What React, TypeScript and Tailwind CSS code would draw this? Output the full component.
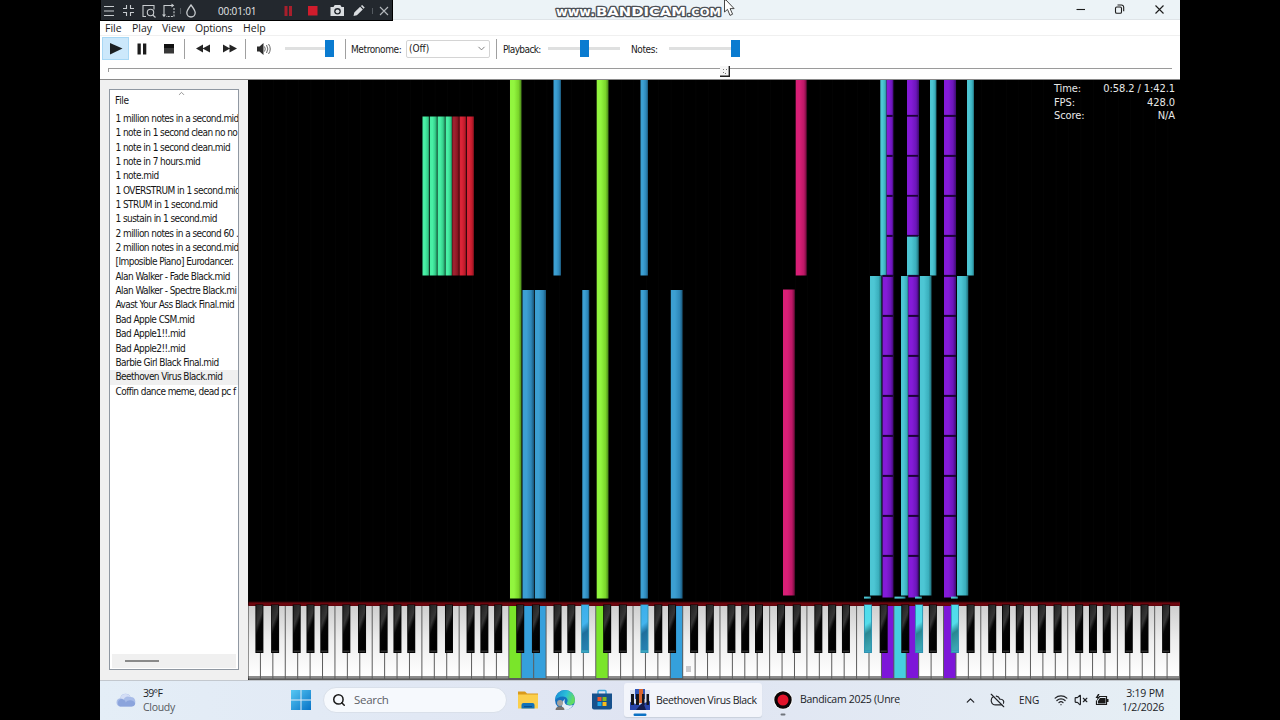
import type { ReactNode } from 'react';
import { Search, ChevronDown, ChevronUp, Wifi, VolumeX, CloudOff } from 'lucide-react';

const FILES = [
    '1 million notes in a second.mid',
    '1 note in 1 second clean no no',
    '1 note in 1 second clean.mid',
    '1 note in 7 hours.mid',
    '1 note.mid',
    '1 OVERSTRUM in 1 second.mid',
    '1 STRUM in 1 second.mid',
    '1 sustain in 1 second.mid',
    '2 million notes in a second 60 .',
    '2 million notes in a second.mid',
    '[Imposible Piano] Eurodancer.',
    'Alan Walker - Fade Black.mid',
    'Alan Walker - Spectre Black.mi',
    'Avast Your Ass Black Final.mid',
    'Bad Apple CSM.mid',
    'Bad Apple1!!.mid',
    'Bad Apple2!!.mid',
    'Barbie Girl Black Final.mid',
    'Beethoven Virus Black.mid',
    'Coffin dance meme, dead pc f',
];

const COLORS: Record<string, string[]> = {
    mint: ['#48f0a5', '#35cf8b', '#1b7a50'],
    dark: ['#9c2230', '#8c1622', '#560a12'],
    red: ['#da2437', '#bd1a2a', '#6b0e18'],
    lime: ['#92f53f', '#7ad52a', '#49851a'],
    blue: ['#3c9fd2', '#2d86b8', '#1a5576'],
    pink: ['#d81f76', '#bd1766', '#6b0c3a'],
    cyan: ['#4dc6d4', '#3aafbd', '#1f6c77'],
    violet: ['#841bd8', '#6c16bb', '#3d0b70'],
};

// x, y, width, height, color
const NOTES: [number, number, number, number, string][] = [
    [174.5, 36.5, 7, 159, 'mint'], [182, 36.5, 7, 159, 'mint'], [189.5, 36.5, 7.5, 159, 'mint'], [197.5, 36.5, 6.5, 159, 'mint'],
    [204.3, 36.5, 6.7, 159, 'dark'], [211.5, 36.5, 7, 159, 'red'], [219, 36.5, 7, 159, 'red'],
    [262, 0, 11.5, 518.5, 'lime'], [348.7, 0, 11.8, 518.5, 'lime'],
    [305.5, 0, 7.5, 195.5, 'blue'], [392.5, 0, 7.5, 195.5, 'blue'],
    [274.5, 210, 11.5, 308.5, 'blue'], [286.8, 210, 11.2, 308.5, 'blue'],
    [334.3, 210, 7, 308.5, 'blue'], [392.5, 210, 7.5, 308.5, 'blue'], [422.8, 210, 11.8, 308.5, 'blue'],
    [547.7, 0, 11, 195.5, 'pink'], [535, 209.5, 11.8, 306, 'pink'],
    [632.3, 0, 6.4, 195.5, 'cyan'], [638.7, 0, 6.8, 195.5, 'violet'],
    [659, 0, 12, 155.5, 'violet'], [659, 156, 11.8, 39.5, 'cyan'],
    [682, 0, 6.5, 195.5, 'cyan'], [719, 0, 7, 195.5, 'cyan'],
    [696, 0, 12, 517.5, 'violet'],
    [622, 196, 11.5, 319.5, 'cyan'], [634.5, 196, 11, 321.5, 'violet'],
    [653, 196, 7.5, 319.5, 'cyan'], [660.3, 196, 10.5, 321.5, 'violet'],
    [671.8, 196, 11.7, 319.5, 'cyan'], [709, 196, 11.3, 319.5, 'cyan'],
    [616, 516.6, 7, 2, 'cyan'], [646.5, 516.6, 11, 2, 'cyan'], [667, 516.6, 7, 2, 'cyan'], [703, 516.6, 7, 2, 'cyan'],
];

const WHITE_W = 931.5 / 75;
const BLACK_OFFSETS = [6.9, 22.6, 44.2, 58, 71.8];

const PRESSED_WHITE: Record<number, string> = {
    21: '#7ae52a', 22: '#35a0dc', 23: '#35a0dc', 28: '#7ae52a', 34: '#35a0dc',
    51: '#7d16d8', 52: '#46cfdf', 53: '#7d16d8', 56: '#7d16d8',
};

// octave * 5 + index of the black key in it
const PRESSED_BLACK: Record<number, string> = {
    19: 'url(#keyblue)', 22: 'url(#keyblue)', 35: 'url(#keycyan)', 38: 'url(#keycyan)', 40: 'url(#keycyan)',
};

function PianoRoll() {
    const whites = Array.from({ length: 75 }, (_, i) => i);
    const blacks: { id: number; x: number }[] = [];
    for (let oct = 0; oct < 11; oct++) {
        BLACK_OFFSETS.forEach((off, i) => {
            const x = 0.5 + oct * 7 * WHITE_W + off;
            if (x < 925) blacks.push({ id: oct * 5 + i, x });
        });
    }
    const lines = Array.from({ length: 12 }, (_, i) => 34.9 + i * 40);

    return (
        <svg width="932" height="600" viewBox="0 0 932 600" className="block">
            <defs>
                {Object.entries(COLORS).map(([name, c]) => (
                    <linearGradient key={name} id={name}>
                        <stop offset="0" stopColor={c[0]} />
                        <stop offset="0.35" stopColor={c[0]} />
                        <stop offset="0.75" stopColor={c[1]} />
                        <stop offset="1" stopColor={c[2]} />
                    </linearGradient>
                ))}
                <linearGradient id="ivory" x2="0" y2="1">
                    <stop offset="0" stopColor="#cfcfcf" />
                    <stop offset="0.5" stopColor="#eeeeee" />
                    <stop offset="1" stopColor="#ffffff" />
                </linearGradient>
                <linearGradient id="ebony" x2="0.35" y2="1">
                    <stop offset="0" stopColor="#222" />
                    <stop offset="0.42" stopColor="#363636" />
                    <stop offset="0.6" stopColor="#050505" />
                    <stop offset="1" stopColor="#000" />
                </linearGradient>
                <linearGradient id="keyblue" x2="0.1" y2="1">
                    <stop offset="0" stopColor="#3aaeea" />
                    <stop offset="0.45" stopColor="#43b4ee" />
                    <stop offset="0.65" stopColor="#1f6f9c" />
                    <stop offset="1" stopColor="#2580b0" />
                </linearGradient>
                <linearGradient id="keycyan" x2="0.1" y2="1">
                    <stop offset="0" stopColor="#4ddcec" />
                    <stop offset="0.45" stopColor="#55dcea" />
                    <stop offset="0.65" stopColor="#298792" />
                    <stop offset="1" stopColor="#3ba5b1" />
                </linearGradient>
                <linearGradient id="felt" x2="0" y2="1">
                    <stop offset="0" stopColor="#2c0307" />
                    <stop offset="0.5" stopColor="#76060f" />
                    <stop offset="1" stopColor="#5a040b" />
                </linearGradient>
            </defs>
            <rect width="932" height="600" fill="#000" />
            {whites.map(i => (
                <rect key={i} x={0.5 + i * WHITE_W} y="0" width="0.6" height="521" fill="#060606" />
            ))}
            {NOTES.map(([x, y, w, h, c], i) => (
                <rect key={i} x={x} y={y} width={w} height={h} fill={`url(#${c})`} />
            ))}
            {lines.map((y, i) => (
                <g key={y} fill="#1c0436">
                    {i < 5 && <rect x="638.7" y={y} width="6" height="2" />}
                    {i < 4 && <rect x="659" y={y} width="11" height="1.8" />}
                    {i >= 4 && <rect x="634.5" y={y} width="11" height="2" />}
                    {i >= 4 && <rect x="660.3" y={y} width="10.5" height="2" />}
                    <rect x="696" y={y} width="12" height="2" />
                </g>
            ))}

            {/* keyboard */}
            <rect x="0.5" y="525" width="931.5" height="75" fill="#5c5c5c" />
            {whites.map(i => (
                <g key={i}>
                    <rect x={0.5 + i * WHITE_W} y="526" width={WHITE_W - 1} height={PRESSED_WHITE[i] ? 72 : 70} fill={PRESSED_WHITE[i] || 'url(#ivory)'} />
                    {!PRESSED_WHITE[i] && <rect x={0.5 + i * WHITE_W} y="596" width={WHITE_W - 1} height="2.5" fill="#8c8c8c" />}
                </g>
            ))}
            <rect x="0.5" y="521.5" width="931.5" height="4.5" fill="url(#felt)" />
            {blacks.map(({ id, x }) => (
                <g key={id}>
                    <rect x={x} y="524.5" width="8" height="48.5" fill={PRESSED_BLACK[id] ? '#2f93b0' : '#050505'} />
                    <rect x={x + 0.9} y="525" width="6.2" height="45" fill={PRESSED_BLACK[id] || 'url(#ebony)'} />
                    <rect x={x + 0.9} y="570.5" width="6.2" height="1.5" fill={PRESSED_BLACK[id] ? '#3ba5c1' : '#2c2c2c'} />
                </g>
            ))}
            <rect x="438" y="586" width="5" height="6" fill="#c9c9cc" />
        </svg>
    );
}

function Recorder() {
    return (
        <div className="flex h-[21px] w-[293px] shrink-0 items-center border border-t-0 border-black bg-[#23282e] text-[#c8cccf]">
            <svg width="116" height="20" viewBox="0 0 116 20" fill="none" stroke="currentColor" strokeWidth="1.1">
                <path d="M3 6.500h10M3 11h10M3 15.500h10" />
                <path d="M25.500 5v3.500H22M29.500 5v3.500H33M25.500 16v-3.500H22M29.500 16v-3.500H33" />
                <path d="M45 16.500h-3v-11h11v4" />
                <circle cx="49.500" cy="12.500" r="3.200" />
                <path d="M51.700 15l2.800 2.500" />
                <path d="M63 16V5.500h9" />
                <path d="M61 14.500h4l-2 2.800zM70.500 3.500v4l2.800-2z" fill="currentColor" stroke="none" />
                <path d="M73 8v8.500H65" strokeDasharray="2 1.200" />
                <path d="M79.500 8v6" stroke="#555b61" />
                <path d="M90 5c-2.500 3.200-4.200 5.400-4.200 7.800a4.200 4.200 0 0 0 8.400 0C94.200 10.400 92.500 8.200 90 5z" strokeWidth="1.300" />
            </svg>
            <span className="ml-px w-[40px] whitespace-nowrap pt-[2px] font-['Open_Sans'] text-[10px] leading-none tracking-[-0.150px] text-[#e6e8ea]">00:01:01</span>
            <svg width="70" height="20" viewBox="0 0 70 20" className="ml-[23px]">
                <path d="M3.500 6h3v10h-3zM8 6h3v10H8z" fill="#a81f2c" />
                <path d="M27 6h9.500v9.500H27z" fill="#d01c2c" />
            </svg>
            <svg width="60" height="20" viewBox="0 0 60 20" className="-ml-[22px] shrink-0">
                <path d="M1.500 7h3l1.200-2h5.600l1.200 2h2.500v9h-13.500z" fill="#dadde0" />
                <circle cx="8.500" cy="11.300" r="3.300" fill="#23282e" />
                <circle cx="8.500" cy="11.300" r="1.900" fill="#dadde0" />
                <path d="M24.500 16l.8-3.400 5.800-5.800 2.700 2.700-5.900 5.800zM31.900 6l1.200-1.100 2.600 2.600-1.100 1.200z" fill="#dadde0" />
                <path d="M43.500 8v6" stroke="#555b61" />
                <path d="M51 7l8 8M59 7l-8 8" stroke="#b4b8bc" strokeWidth="1.100" />
            </svg>
        </div>
    );
}

function TitleBar() {
    return (
        <div className="flex h-[20px] border-b border-[#dfe4e8] bg-[#ecf3f7]">
            <Recorder />
            <svg width="190" height="20" viewBox="0 0 190 20" className="ml-[157px] shrink-0">
                <g fontFamily="DejaVu Sans" fontWeight="bold" fill="#fff" stroke="#4c5157" strokeWidth="2.600" strokeLinejoin="round" style={{ paintOrder: 'stroke' }}>
                    <text x="6" y="15.5" fontSize="12" textLength="39" lengthAdjust="spacingAndGlyphs">www.</text>
                    <text x="46" y="15.5" fontSize="12.5" textLength="90" lengthAdjust="spacingAndGlyphs">BANDICAM</text>
                    <text x="137" y="15.5" fontSize="10" textLength="34" lengthAdjust="spacingAndGlyphs">.COM</text>
                </g>
                <path d="M174.500 0v12l3-2.600 2.500 6 2.600-1.200-2.500-5.600h4L176 0z" fill="#fff" stroke="#333" strokeWidth="0.900" />
            </svg>
            <svg width="110" height="20" viewBox="0 0 110 20" className="ml-auto mr-[4px] shrink-0" fill="none" stroke="#1c1c1c" strokeWidth="1.100">
                <path d="M10.500 9.500h8.500" />
                <rect x="49.500" y="7" width="6" height="6.200" rx="1.300" />
                <path d="M51.500 5h4a2.200 2.200 0 0 1 2.200 2.200v4" />
                <path d="M89.500 5.500l8 8M97.500 5.500l-8 8" />
            </svg>
        </div>
    );
}

function Divider({ className }: { className: string }) {
    return <div className={`h-[20px] w-px shrink-0 bg-[#a0a0a0] ${className}`} />;
}

function Toolbar() {
    return (
        <div className="flex h-[25px] shrink-0 items-center bg-white font-['DejaVu_Sans_Condensed','DejaVu_Sans'] text-[10px] text-[#1a1a1a]">
            <div className="ml-[2px] flex h-[23px] w-[27px] shrink-0 items-center justify-center border border-[#a8d8f5] bg-[#cce8fb]">
                <svg width="14" height="12" viewBox="0 0 14 12"><path d="M1 0v11.500L13.500 5.500z" fill="#1b1f22" /></svg>
            </div>
            <svg width="54" height="14" viewBox="0 0 54 14" className="shrink-0">
                <path d="M8.500 1.500h3.300v11H8.500zM14 1.500h3.300v11H14z" fill="#1c1c1c" />
                <path d="M35 2.500h10v9H35z" fill="#383838" />
                <path d="M35 2h10v4H35z" fill="#111" />
            </svg>
            <Divider className="ml-[1px]" />
            <svg width="60" height="12" viewBox="0 0 60 12" className="shrink-0" fill="#242424">
                <path d="M11 5.500l7-4v8zM17.500 5.500l7.500-4v8zM38 1.500l7 4-7 4zM44.500 1.500l7.500 4-7.500 4z" />
            </svg>
            <Divider className="" />
            <svg width="40" height="16" viewBox="0 0 40 16" className="shrink-0">
                <path d="M11 5.500h2.500l4-3.500v12l-4-3.500H11z" fill="#2c2c2c" />
                <path d="M18.500 5.500q1.500 2.500 0 5M20.500 4q2.700 4 0 8M22.500 3q3.500 5 0 10" fill="none" stroke="#555" strokeWidth="0.900" />
            </svg>
            <div className="-ml-[1px] h-[3px] w-[40px] shrink-0 bg-[#dfe0e0]" />
            <div className="h-[17px] w-[9px] shrink-0 bg-[#0a7bd0]" />
            <Divider className="ml-[11px]" />
            <span className="ml-[5px] mt-px w-[55px] shrink-0 whitespace-nowrap tracking-[-0.400px]">Metronome:</span>
            <div className="flex h-[18px] w-[84px] shrink-0 items-center justify-between rounded-[2px] border border-[#d4d4d4] pl-[2px] pr-[2px]">
                <span className="pt-px text-[10px] leading-none">(Off)</span>
                <ChevronDown size={11} strokeWidth={1.800} className="text-[#666]" />
            </div>
            <Divider className="ml-[6px]" />
            <span className="ml-[6px] mt-px w-[44px] shrink-0 whitespace-nowrap tracking-[-0.600px]">Playback:</span>
            <div className="ml-[1px] h-[3px] w-[32px] shrink-0 bg-[#dfe0e0]" />
            <div className="h-[17px] w-[9px] shrink-0 bg-[#0a7bd0]" />
            <div className="h-[3px] w-[31px] shrink-0 bg-[#dfe0e0]" />
            <span className="ml-[11px] mt-px w-[38px] shrink-0 whitespace-nowrap tracking-[-0.400px]">Notes:</span>
            <div className="h-[3px] w-[62px] shrink-0 bg-[#dfe0e0]" />
            <div className="h-[17px] w-[9px] shrink-0 bg-[#0a7bd0]" />
        </div>
    );
}

function TrayTime({ children }: { children: ReactNode }) {
    return <span className="leading-[11px] tracking-[-0.200px]">{children}</span>;
}

function Taskbar() {
    return (
        <div className="flex h-[40px] shrink-0 items-center border-t border-[#c3c8ce] bg-linear-to-r from-[#e4eef7] via-[#dfe4f2] to-[#e6eff5] pb-px font-['Open_Sans'] text-[11px] text-[#202226]">
            <svg width="22" height="16" viewBox="0 0 22 16" className="ml-[15px] shrink-0">
                <path d="M5 14.500a4.200 4.200 0 0 1 .2-8.300A5.500 5.500 0 0 1 15.600 5 4.800 4.800 0 0 1 16.500 14.500z" fill="#a8bce8" />
                <path d="M5 14.500a4 4 0 0 1 1.500-7.500c2 0 4 1.500 4.200 3.500 2-3 8-3 9.500 1a3.600 3.600 0 0 1-3.700 3z" fill="#8ba4dc" />
                <path d="M5.200 6.500A5.500 5.500 0 0 1 15.500 5c-4-1.500-6 .5-7 2.500-1-1-2-1.300-3.300-1z" fill="#d4def5" />
            </svg>
            <div className="ml-[6px] flex w-[146px] shrink-0 flex-col gap-[3px]">
                <span className="text-[10.500px] leading-[11px] tracking-[-0.700px]">39°F</span>
                <span className="text-[10.500px] leading-[11px] tracking-[-0.300px] text-[#55595e]">Cloudy</span>
            </div>
            <svg width="22" height="22" viewBox="0 0 22 22" className="ml-[1px] shrink-0">
                <defs>
                    <linearGradient id="win" x2="1" y2="1">
                        <stop offset="0" stopColor="#57c8f3" />
                        <stop offset="1" stopColor="#0672c6" />
                    </linearGradient>
                </defs>
                <path d="M1 1h9.500v9.500H1zM11.500 1H21v9.500h-9.500zM1 11.500h9.500V21H1zM11.500 11.500H21V21h-9.500z" fill="url(#win)" />
            </svg>
            <div className="ml-[11px] flex h-[26px] w-[184px] shrink-0 items-center rounded-full border border-[#d9e0ea] bg-[#f6f9fd] pl-[8px]">
                <Search size={14} strokeWidth={2.600} className="text-[#1a1a1a]" />
                <span className="ml-[8px] text-[11.500px] tracking-[-0.300px] text-[#5c6066]">Search</span>
            </div>
            <svg width="22" height="20" viewBox="0 0 22 20" className="ml-[10px] shrink-0">
                <path d="M1 1.500h7l2 2h11v4H1z" fill="#d99a1c" />
                <path d="M1 4.500h20v14H1z" fill="#fbcf4c" />
                <path d="M4.500 18.500v-3.500a2 2 0 0 1 2-2h9a2 2 0 0 1 2 2v3.500z" fill="#1272b8" />
                <path d="M7 16h8v1.200H7z" fill="#0b4f8a" />
            </svg>
            <svg width="22" height="22" viewBox="0 0 22 22" className="ml-[15px] shrink-0">
                <defs>
                    <linearGradient id="edge" x2="1" y2="0.300">
                        <stop offset="0" stopColor="#1787d6" />
                        <stop offset="0.600" stopColor="#2bc0d8" />
                        <stop offset="1" stopColor="#62dc62" />
                    </linearGradient>
                </defs>
                <circle cx="11" cy="11" r="10" fill="#1571c0" />
                <path d="M1 11A10 10 0 0 1 21 11c0 3.500-2.500 5-5 5-3 0-4-1-3-2.500 2-3-1-6-4-6-4 0-6.500 2-8 3.500z" fill="url(#edge)" />
                <path d="M11 10c-2 5 2 7.500 8 6-2 4-6 5.500-9 5-3-1-3-8 1-11z" fill="#e5edf6" />
                <circle cx="6" cy="14" r="3" fill="#a3a09d" />
                <path d="M1.500 21c0-5 9-5 9 0z" fill="#77716c" />
            </svg>
            <svg width="22" height="22" viewBox="0 0 22 22" className="ml-[15px] shrink-0">
                <path d="M7 5V2.500a1 1 0 0 1 1-1h6a1 1 0 0 1 1 1V5" fill="none" stroke="#3aa6dd" strokeWidth="1.500" />
                <path d="M1 4.500h20v14a2 2 0 0 1-2 2H3a2 2 0 0 1-2-2z" fill="#17518c" />
                <path d="M6.500 8h4v4h-4z" fill="#f0552c" />
                <path d="M11.500 8h4v4h-4z" fill="#82bc1e" />
                <path d="M6.500 13h4v4h-4z" fill="#1ca6e8" />
                <path d="M11.500 13h4v4h-4z" fill="#fbbc1a" />
            </svg>
            <div className="ml-[11px] flex h-[34px] w-[138px] shrink-0 items-center rounded-[3px] bg-[#f3f5fb] pl-[5px] shadow-[0_1px_1px_#c9d0dc]">
                <svg width="22" height="32" viewBox="0 0 22 32" className="shrink-0">
                    <path d="M1 6h20v20H1z" fill="#d8dfef" />
                    <path d="M6 5h10v10H6z" fill="#3157b8" />
                    <path d="M10 5h4v14h-4z" fill="#d9632b" />
                    <path d="M1 18l9 3 11-4v9H1z" fill="#2a46aa" />
                    <path d="M2 10h3v11H2zM7 10h3v11H7zM13 10h2.500v11H13zM17.500 10h2.500v11h-2.500z" fill="#14161c" />
                    <path d="M7 26l7-8 3 8z" fill="#141d4c" />
                    <rect x="4.500" y="29.500" width="13" height="2.500" rx="1.200" fill="#0c72c4" />
                </svg>
                <span className="ml-[5px] whitespace-nowrap text-[10.500px] leading-none tracking-[-0.380px]">Beethoven Virus Black</span>
            </div>
            <svg width="22" height="32" viewBox="0 0 22 32" className="ml-[10px] shrink-0">
                <circle cx="11" cy="16" r="9.500" fill="#fff" />
                <circle cx="11" cy="16" r="8.700" fill="#0a0506" />
                <circle cx="11" cy="16" r="5.500" fill="#e2132a" />
                <rect x="8.500" y="29.500" width="5" height="2" rx="1" fill="#70757c" />
            </svg>
            <div className="ml-[6px] w-[100px] shrink-0 overflow-hidden whitespace-nowrap text-[10.500px] tracking-[-0.300px]">Bandicam 2025 (Unreg</div>
            <ChevronUp size={13} strokeWidth={2.300} className="ml-[64px] shrink-0" />
            <CloudOff size={15} strokeWidth={1.800} className="ml-[13px] shrink-0" />
            <span className="ml-[14px] w-[22px] whitespace-nowrap text-[10px] leading-none">ENG</span>
            <Wifi size={14} strokeWidth={2.200} className="ml-[13px] shrink-0" />
            <VolumeX size={14} strokeWidth={2} className="ml-[6px] shrink-0" />
            <svg width="14" height="12" viewBox="0 0 14 12" className="ml-[7px] shrink-0">
                <path d="M4 2.500h7.500v8H1.500v-4" fill="none" stroke="#1a1a1a" strokeWidth="1.200" />
                <path d="M5 4h5.500v5.500H3V7z" fill="#1a1a1a" />
                <path d="M12 5h1.500v3H12z" fill="#1a1a1a" />
                <path d="M3 0L0.500 4h2L1.500 7 5 3H3.200L4.500 0z" fill="#1a1a1a" />
            </svg>
            <div className="ml-auto mr-[16px] flex shrink-0 flex-col items-end gap-[3px] text-[10.500px]">
                <TrayTime>3:19 PM</TrayTime>
                <TrayTime>1/2/2026</TrayTime>
            </div>
        </div>
    );
}

export default function App() {
    return (
        <div className="h-[720px] w-[1280px] overflow-hidden bg-black">
            <div className="mx-auto flex h-[720px] w-[1080px] flex-col overflow-hidden bg-white">
                <TitleBar />
                <div className="flex h-[16px] shrink-0 items-center border-b border-[#f0f0f0] pl-[5px] pt-px font-['Open_Sans'] text-[10.500px] leading-none text-[#1a1a1a]">
                    <span className="w-[27px]">File</span>
                    <span className="w-[30px]">Play</span>
                    <span className="w-[33px]">View</span>
                    <span className="w-[48px] tracking-[-0.200px]">Options</span>
                    <span>Help</span>
                </div>
                <Toolbar />
                <div className="flex h-[19px] shrink-0 items-start border-b border-[#8a8a8a] bg-white px-[8px] pt-[7px]">
                    <div className="h-[4px] w-[612px] border-l border-t border-[#9a9a9a]" />
                    <svg width="10" height="11" viewBox="0 0 10 11" className="-mt-[2px] shrink-0">
                        <path d="M0 0h10v11H0z" fill="#f6f6f6" />
                        <path d="M9.300 0v10.300H0" fill="none" stroke="#222" strokeWidth="1.400" />
                        <path d="M3 3h1v1H3zM6 3h1v1H6zM3 6h1v1H3zM5 7h1v1H5z" fill="#777" />
                    </svg>
                    <div className="h-px flex-1 bg-[#9a9a9a]" />
                </div>
                <div className="flex h-[600px] shrink-0">
                    <div className="w-[148px] shrink-0 bg-[#f0f0f0] pl-[9px] pt-[9px]">
                        <div className="flex h-[581px] w-[130px] flex-col overflow-hidden border border-[#9098a2] bg-white font-['DejaVu_Sans_Condensed','DejaVu_Sans'] text-[10px] text-[#151515]">
                            <div className="flex h-[5px] shrink-0 justify-center pl-[14px]">
                                <ChevronUp size={9} strokeWidth={1.800} className="-mt-[1px] shrink-0 text-[#666]" />
                            </div>
                            <div className="h-[17px] shrink-0 pl-[5px] leading-[11px] tracking-[-0.300px]">File</div>
                            {FILES.map(f => (
                                <div
                                    key={f}
                                    className={`h-[14.350px] shrink-0 overflow-hidden whitespace-nowrap pl-[5.500px] leading-[14px] tracking-[-0.560px] ${f.startsWith('Beethoven') ? 'bg-[#f0f0f0]' : ''}`}
                                >
                                    {f}
                                </div>
                            ))}
                            <div className="mx-[2px] mb-px mt-auto flex h-[14px] shrink-0 items-center bg-[#f0f0f0]">
                                <div className="ml-[13px] h-[2px] w-[34px] bg-[#8a8a8a]" />
                            </div>
                        </div>
                    </div>
                    <div className="relative w-[932px]">
                        <PianoRoll />
                        <div className="absolute right-0 top-0 grid h-[45px] w-[132px] grid-cols-[auto_auto] content-start justify-between pl-[6px] pr-[5px] pt-[2px] font-['DejaVu_Sans_Condensed','DejaVu_Sans'] text-[11px] leading-[13.500px] tracking-[-0.080px] text-[#e8e8e8]">
                            <span>Time:</span><span className="text-right">0:58.2 / 1:42.1</span>
                            <span>FPS:</span><span className="text-right">428.0</span>
                            <span>Score:</span><span className="text-right">N/A</span>
                        </div>
                    </div>
                </div>
                <Taskbar />
            </div>
        </div>
    );
}
